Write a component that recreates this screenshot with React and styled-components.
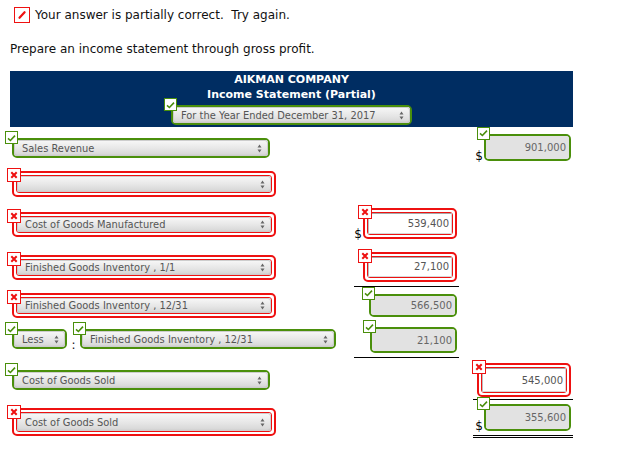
import React from "react";
import styled, { createGlobalStyle } from "styled-components";

const GREEN = "#4a8f0b";
const RED = "#ee1111";
const NAVY = "#002d62";

const GlobalStyle = createGlobalStyle`
  body {
    margin: 0;
    background: #fff;
    font-family: "DejaVu Sans", Verdana, sans-serif;
    color: #111;
  }
`;

const Page = styled.div`
  width: 631px;
  padding-top: 7px;
`;

const Notice = styled.div`
  display: flex;
  align-items: center;
  gap: 5px;
  margin-left: 14px;
  font-size: 12px;
  line-height: 16px;
`;

const NoticeIcon = styled.span`
  width: 16px;
  height: 16px;
  box-sizing: border-box;
  border: 1px solid ${RED};
  display: flex;
  align-items: center;
  justify-content: center;
`;

const Prompt = styled.p`
  margin: 18px 0 0 10px;
  font-size: 12px;
  line-height: 16px;
`;

const Banner = styled.div`
  margin: 14px 0 0 10px;
  width: 563px;
  height: 56px;
  box-sizing: border-box;
  padding-top: 1px;
  background: ${NAVY};
  display: flex;
  flex-direction: column;
  align-items: center;
`;

const BannerLine = styled.div`
  color: #fff;
  font-weight: bold;
  font-size: 11px;
  line-height: 15px;
`;

const BannerSelect = styled.div`
  margin-top: 3px;
`;

const Rows = styled.div`
  margin-top: 3px;
`;

const Row = styled.div`
  display: grid;
  grid-template-columns: 354px 105px 114px;
  height: ${(p) => p.$h}px;
  margin-top: ${(p) => p.$gap || 0}px;
`;

const LabelCell = styled.div`
  display: flex;
  align-items: center;
  box-sizing: border-box;
  padding-left: 12px;
  padding-top: ${(p) => Math.max(0, p.$dy || 0)}px;
  padding-bottom: ${(p) => Math.max(0, -(p.$dy || 0))}px;
`;

const AmountCell = styled.div`
  display: flex;
  align-items: center;
  justify-content: flex-end;
  box-sizing: border-box;
  padding-right: 2px;
  margin-left: ${(p) => p.$indent || 0}px;
  border-top: ${(p) => (p.$over ? "1px solid #000" : "none")};
  border-bottom: ${(p) =>
    p.$under === "double" ? "3px double #000" : p.$under ? "1px solid #000" : "none"};
`;

const AmountGroup = styled.div`
  display: flex;
  align-items: flex-end;
`;

const Dollar = styled.span`
  font-size: 12px;
  line-height: 12px;
  margin: 0 1px -1px 0;
  color: #000;
`;

const Colon = styled.span`
  width: 13px;
  text-align: center;
  align-self: flex-end;
  font-size: 12px;
  line-height: 12px;
  margin-bottom: 4px;
`;

const FieldWrap = styled.div`
  position: relative;
  flex: none;
  width: ${(p) => p.$w}px;
`;

const Badge = styled.span`
  position: absolute;
  z-index: 2;
  left: ${(p) => (p.$ok ? -7 : -5)}px;
  top: ${(p) => (p.$ok ? -7 : -3)}px;
  width: ${(p) => (p.$ok ? 13 : 14)}px;
  height: ${(p) => (p.$ok ? 13 : 14)}px;
  box-sizing: border-box;
  border: 1px solid ${(p) => (p.$ok ? GREEN : RED)};
  background: #fff;
  display: flex;
  align-items: center;
  justify-content: center;
`;

const Ring = styled.div`
  box-sizing: border-box;
  height: ${(p) => p.$h}px;
  border: 2px solid ${(p) => (p.$ok ? GREEN : RED)};
  border-radius: 5px;
  padding: ${(p) => (p.$ok ? 0 : 2)}px;
  background: #fff;
  display: flex;
`;

const InnerRing = styled.div`
  flex: 1;
  display: flex;
  border: 1px solid ${RED};
  border-radius: 3px;
`;

const SelectFace = styled.div`
  flex: 1;
  display: flex;
  align-items: center;
  justify-content: space-between;
  padding: 0 6px 0 8px;
  border-radius: 3px;
  background: linear-gradient(#f8f8f8, #e6e6e6 55%, #d4d4d4);
  box-shadow: inset 0 0 0 1px #cdcdcd, inset 0 -1px 1px #b4b4b4;
  font-size: 9.9px;
  color: #555;
  white-space: nowrap;
`;

const AmountFace = styled.div`
  flex: 1;
  display: flex;
  align-items: center;
  justify-content: flex-end;
  padding-right: ${(p) => (p.$ok ? 3 : 2)}px;
  border-radius: ${(p) => (p.$ok ? 3 : 1)}px;
  background: ${(p) => (p.$ok ? "#e2e2e2" : "#fff")};
  border: ${(p) => (p.$ok ? "none" : "1px solid #d8d8d8")};
  border-top-color: #a8a8a8;
  border-left-color: #bcbcbc;
  font-size: 10px;
  color: ${(p) => (p.$ok ? "#666" : "#555")};
`;

const Check = () => (
  <svg width="9" height="8" viewBox="0 0 9 8">
    <path d="M1 4.3 L3.4 6.5 L8 1.6" fill="none" stroke={GREEN} strokeWidth="1.6" />
  </svg>
);

const Cross = () => (
  <svg width="8" height="8" viewBox="0 0 8 8">
    <path d="M1.3 1.3 L6.7 6.7 M6.7 1.3 L1.3 6.7" stroke={RED} strokeWidth="2" />
  </svg>
);

const Arrows = () => (
  <svg width="5" height="9" viewBox="0 0 5 9">
    <path d="M2.5 0.5 L4.5 3.5 H0.5 Z M2.5 8.5 L4.5 5.5 H0.5 Z" fill="#666" />
  </svg>
);

const Pencil = () => (
  <svg width="10" height="10" viewBox="0 0 10 10">
    <path d="M2.5 7.8 L7.6 2.2" stroke={RED} strokeWidth="2.2" strokeLinecap="round" />
  </svg>
);

const Field = ({ ok, w, h, amount, text }) => {
  const face = amount ? (
    <AmountFace $ok={ok}>{text}</AmountFace>
  ) : (
    <SelectFace>
      <span>{text}</span>
      <Arrows />
    </SelectFace>
  );
  return (
    <FieldWrap $w={w}>
      <Badge $ok={ok}>{ok ? <Check /> : <Cross />}</Badge>
      <Ring $ok={ok} $h={h}>
        {ok ? face : <InnerRing>{face}</InnerRing>}
      </Ring>
    </FieldWrap>
  );
};

export default function App() {
  return (
    <Page>
      <GlobalStyle />
      <Notice>
        <NoticeIcon>
          <Pencil />
        </NoticeIcon>
        <span>Your answer is partially correct.&nbsp; Try again.</span>
      </Notice>
      <Prompt>Prepare an income statement through gross profit.</Prompt>

      <Banner>
        <BannerLine>AIKMAN COMPANY</BannerLine>
        <BannerLine>Income Statement (Partial)</BannerLine>
        <BannerSelect>
          <Field ok w={241} h={20} text="For the Year Ended December 31, 2017" />
        </BannerSelect>
      </Banner>

      <Rows>
        <Row $h={34}>
          <LabelCell $dy={2}>
            <Field ok w={258} h={20} text="Sales Revenue" />
          </LabelCell>
          <AmountCell />
          <AmountCell $indent={14}>
            <AmountGroup>
              <Dollar>$</Dollar>
              <Field ok amount w={87} h={27} text="901,000" />
            </AmountGroup>
          </AmountCell>
        </Row>

        <Row $h={34} $gap={3}>
          <LabelCell>
            <Field w={264} h={26} text="" />
          </LabelCell>
          <AmountCell />
          <AmountCell $indent={14} />
        </Row>

        <Row $h={34} $gap={5}>
          <LabelCell $dy={3}>
            <Field w={264} h={25} text="Cost of Goods Manufactured" />
          </LabelCell>
          <AmountCell>
            <AmountGroup>
              <Dollar>$</Dollar>
              <Field amount w={94} h={31} text="539,400" />
            </AmountGroup>
          </AmountCell>
          <AmountCell $indent={14} />
        </Row>

        <Row $h={35} $gap={9}>
          <LabelCell $dy={2}>
            <Field w={264} h={25} text="Finished Goods Inventory , 1/1" />
          </LabelCell>
          <AmountCell>
            <Field amount w={94} h={30} text="27,100" />
          </AmountCell>
          <AmountCell $indent={14} />
        </Row>

        <Row $h={37} $gap={2}>
          <LabelCell $dy={2}>
            <Field w={264} h={25} text="Finished Goods Inventory , 12/31" />
          </LabelCell>
          <AmountCell $over>
            <Field ok amount w={88} h={23} text="566,500" />
          </AmountCell>
          <AmountCell $indent={14} />
        </Row>

        <Row $h={35}>
          <LabelCell $dy={-3}>
            <Field ok w={55} h={20} text="Less" />
            <Colon>:</Colon>
            <Field ok w={256} h={20} text="Finished Goods Inventory , 12/31" />
          </LabelCell>
          <AmountCell $under>
            <Field ok amount w={87} h={26} text="21,100" />
          </AmountCell>
          <AmountCell $indent={14} />
        </Row>

        <Row $h={36} $gap={4}>
          <LabelCell>
            <Field ok w={258} h={20} text="Cost of Goods Sold" />
          </LabelCell>
          <AmountCell />
          <AmountCell $indent={14}>
            <Field amount w={94} h={34} text="545,000" />
          </AmountCell>
        </Row>

        <Row $h={39} $gap={1}>
          <LabelCell $dy={7}>
            <Field w={264} h={28} text="Cost of Goods Sold" />
          </LabelCell>
          <AmountCell />
          <AmountCell $indent={14} $over $under="double">
            <AmountGroup>
              <Dollar>$</Dollar>
              <Field ok amount w={87} h={27} text="355,600" />
            </AmountGroup>
          </AmountCell>
        </Row>
      </Rows>
    </Page>
  );
}
